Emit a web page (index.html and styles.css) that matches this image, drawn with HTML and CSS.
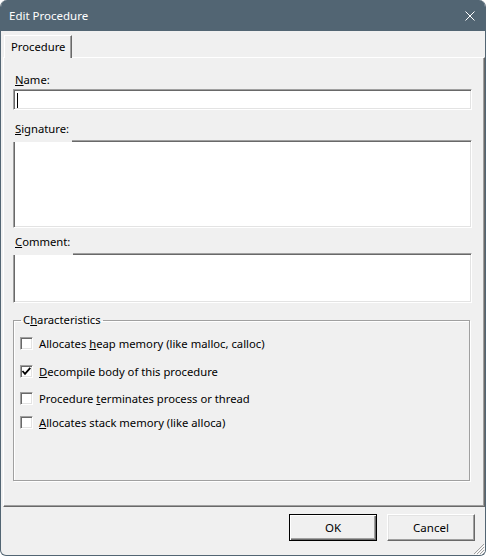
FILE: index.html
```html
<!DOCTYPE html>
<html>
<head>
<meta charset="utf-8">
<link rel="stylesheet" href="styles.css">
</head>
<body>
<div class="window">
  <div class="titlebar">
    <span class="title">Edit Procedure</span>
    <svg class="close" width="10" height="10" viewBox="0 0 10 10"><path d="M0.5 0.5L9.5 9.5M9.5 0.5L0.5 9.5" stroke="#fff" stroke-width="1"/></svg>
  </div>
  <div class="client">
    <div class="tabs"><div class="tab">Procedure</div></div>
    <div class="panel">
      <div class="field">
        <span class="lbl"><u>N</u>ame:</span>
        <div class="edit name"><span class="caret"></span></div>
      </div>
      <div class="field">
        <span class="lbl cover"><u>S</u>ignature:</span>
        <div class="edit sig"></div>
      </div>
      <div class="field comment">
        <span class="lbl cover"><u>C</u>omment:</span>
        <div class="edit cmt"></div>
      </div>
      <fieldset class="group">
        <legend>C<u>h</u>aracteristics</legend>
        <div class="check"><span class="box"></span><span class="ctext">Allocates <u>h</u>eap memory (like malloc, calloc)</span></div>
        <div class="check"><span class="box"><svg width="11" height="11" viewBox="0 0 11 11"><path d="M1.5 5L4 7.8L9.3 1.8" fill="none" stroke="#000" stroke-width="1.8"/></svg></span><span class="ctext"><u>D</u>ecompile body of this procedure</span></div>
        <div class="check"><span class="box"></span><span class="ctext">Procedure <u>t</u>erminates process or thread</span></div>
        <div class="check"><span class="box"></span><span class="ctext"><u>A</u>llocates stack memory (like alloca)</span></div>
      </fieldset>
    </div>
    <div class="buttons">
      <button class="btn default">OK</button>
      <button class="btn">Cancel</button>
    </div>
  </div>
  <svg class="grip" width="12" height="12" viewBox="0 0 12 12">
    <path d="M11 1L1 11M11 4L4 11M11 7L7 11M11 10L10 11" stroke="#a0a0a0" stroke-width="1"/>
    <path d="M12 2L2 12M12 5L5 12M12 8L8 12" stroke="#fff" stroke-width="1"/>
  </svg>
</div>
</body>
</html>
```

FILE: styles.css
```css
html, body {
  margin: 0;
  padding: 0;
  background: #ffffff;
}
body {
  font-family: "Noto Sans", "DejaVu Sans", sans-serif;
  font-size: 11.25px;
  color: #000;
}
.window {
  position: relative;
  width: 486px;
  height: 556px;
  box-sizing: border-box;
  border: 1px solid #526573;
  border-top: 0;
  border-radius: 7px 7px 6px 6px;
  background: #f0f0f0;
  overflow: hidden;
  display: flex;
  flex-direction: column;
}
.titlebar {
  height: 31px;
  flex: none;
  margin: 0 -1px;
  background: #526573;
  color: #fff;
  display: flex;
  align-items: center;
  justify-content: space-between;
  padding: 0 11px 0 9px;
}
.title {
  font-size: 11.5px;
  line-height: 16px;
}
.close {
  display: block;
}
.client {
  flex: 1;
  display: flex;
  flex-direction: column;
  padding-left: 2px;
}
.tabs {
  height: 26px;
  display: flex;
  align-items: flex-end;
  padding-left: 1px;
}
.tab {
  position: relative;
  z-index: 1;
  height: 22px;
  width: 60px;
  margin-bottom: -1px;
  box-sizing: content-box;
  border-top: 1px solid #fff;
  border-left: 1px solid #fff;
  border-right: 1px solid #696969;
  box-shadow: inset -1px 0 0 #a0a0a0;
  background: #f0f0f0;
  line-height: 21px;
  padding-left: 6px;
}
.panel {
  height: 450px;
  box-sizing: border-box;
  border-top: 1px solid #fff;
  border-left: 1px solid #fff;
  border-right: 1px solid #696969;
  border-bottom: 1px solid #696969;
  box-shadow: inset -1px -1px 0 #a0a0a0;
  padding: 14px 12px 0 9px;
  display: flex;
  flex-direction: column;
}
.field {
  display: flex;
  flex-direction: column;
  align-items: flex-start;
}
.lbl {
  line-height: 16px;
  padding-left: 2px;
  padding-bottom: 1px;
}
.lbl.cover {
  position: relative;
  z-index: 1;
  background: #f0f0f0;
  padding-bottom: 5px;
  padding-right: 3px;
  margin-bottom: -2px;
  margin-top: 11px;
}
.comment .lbl.cover {
  margin-top: 6px;
}
.edit {
  align-self: stretch;
  box-sizing: border-box;
  background: #fff;
  border: 1px solid;
  border-color: #a0a0a0 #fff #fff #a0a0a0;
  box-shadow: inset 1px 1px 0 #696969, inset -1px -1px 0 #e3e3e3;
}
.edit.name {
  height: 21px;
  padding: 3px 0 0 2px;
}
.caret {
  display: block;
  width: 1px;
  height: 15px;
  margin-left: 1px;
  background: #000;
}
.edit.sig {
  height: 88px;
}
.edit.cmt {
  height: 50px;
}
.group {
  margin: 9px 2px 0 0;
  padding: 0 0 51px 0;
  border: 1px solid #a0a0a0;
  box-shadow: inset 1px 1px 0 #fff, 1px 1px 0 #fff;
  min-width: 0;
}
.group legend {
  margin-left: 7px;
  padding: 0 2px;
  line-height: 16px;
}
.check {
  display: flex;
  align-items: center;
  height: 13px;
  padding-left: 6px;
}
.check:nth-of-type(1) { margin-top: 9px; }
.check:nth-of-type(2) { margin-top: 15px; }
.check:nth-of-type(3) { margin-top: 14px; }
.check:nth-of-type(4) { margin-top: 11px; }
.box {
  width: 13px;
  height: 13px;
  box-sizing: border-box;
  flex: none;
  background: #fff;
  border: 1px solid;
  border-color: #a0a0a0 #fff #fff #a0a0a0;
  box-shadow: inset 1px 1px 0 #696969, inset -1px -1px 0 #e3e3e3;
  display: flex;
  align-items: center;
  justify-content: center;
}
.box svg {
  display: block;
}
.ctext {
  margin-left: 6px;
  line-height: 13px;
  white-space: nowrap;
}
.buttons {
  flex: 1;
  display: flex;
  justify-content: flex-end;
  align-items: flex-start;
  gap: 10px;
  padding: 7px 10px 0 0;
}
.btn {
  width: 88px;
  height: 27px;
  box-sizing: border-box;
  font-family: inherit;
  font-size: 11.5px;
  color: #000;
  background: #f0f0f0;
  border: 1px solid;
  border-color: #fff #696969 #696969 #fff;
  box-shadow: inset -1px -1px 0 #a0a0a0, inset 1px 1px 0 #e3e3e3;
  padding: 0;
  margin: 0;
  line-height: 16px;
}
.btn.default {
  border: 1px solid #000;
  box-shadow: inset 1px 1px 0 #fff, inset -1px -1px 0 #696969, inset -2px -2px 0 #a0a0a0;
}
.grip {
  position: absolute;
  right: 0;
  bottom: 0;
}
```
